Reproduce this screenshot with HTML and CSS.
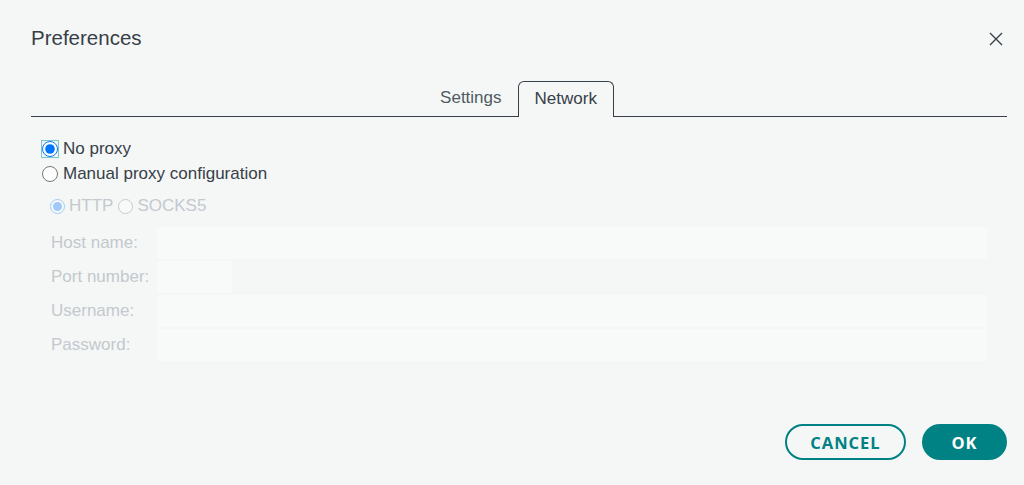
FILE: index.html
```html
<!DOCTYPE html>
<html lang="en">
<head>
    <meta charset="UTF-8">
    <meta name="viewport" content="width=device-width, initial-scale=1.0">
    <title>Preferences</title>
    <link rel="stylesheet" href="styles.css">
</head>
<body>

    <div class="dialog">
        <header class="dialog-header">
            <h1>Preferences</h1>
            <button class="close-button" aria-label="Close">
                <svg width="14" height="14" viewBox="0 0 14 14">
                    <path d="M1 1 L13 13 M13 1 L1 13" stroke="#374047" stroke-width="1.4" fill="none"/>
                </svg>
            </button>
        </header>

        <div class="tabs">
            <div class="tab">Settings</div>
            <div class="tab active">Network</div>
        </div>

        <div class="tab-content">
            <!-- Proxy mode -->
            <label class="radio-row">
                <input type="radio" name="proxy" class="focused" checked>
                <span>No proxy</span>
            </label>
            <label class="radio-row">
                <input type="radio" name="proxy">
                <span>Manual proxy configuration</span>
            </label>

            <div class="protocols">
                <label class="radio-small">
                    <input type="radio" name="protocol" checked>
                    <span>HTTP</span>
                </label>
                <label class="radio-small">
                    <input type="radio" name="protocol">
                    <span>SOCKS5</span>
                </label>
            </div>

            <div class="proxy-form">
                <label>Host name:</label>
                <input type="text" class="field" disabled>
                <label>Port number:</label>
                <input type="text" class="field short" disabled>
                <label>Username:</label>
                <input type="text" class="field" disabled>
                <label>Password:</label>
                <input type="password" class="field" disabled>
            </div>
        </div>

        <footer class="dialog-footer">
            <button class="btn btn-secondary">CANCEL</button>
            <button class="btn btn-primary">OK</button>
        </footer>
    </div>

</body>
</html>
```

FILE: styles.css
```css
body {
    font-family: 'Liberation Sans', Arial, sans-serif;
    margin: 0;
    padding: 0;
    background-color: #f5f7f7;
    color: #374047;
}

.dialog {
    height: 485px;
    box-sizing: border-box;
    padding: 0 17px 0 31px;
    display: flex;
    flex-direction: column;
}

.dialog-header {
    display: flex;
    justify-content: space-between;
    align-items: center;
    height: 78px;
}

.dialog-header h1 {
    margin: 0;
    font-size: 20.5px;
    font-weight: normal;
    padding-bottom: 2px;
}

.close-button {
    background: none;
    border: none;
    padding: 0;
    margin-right: 4px;
    width: 14px;
    height: 14px;
    cursor: pointer;
    display: flex;
}

.tabs {
    display: flex;
    justify-content: center;
    align-items: flex-end;
    height: 38px;
    border-bottom: 1px solid #374047;
}

.tab {
    font-size: 17px;
    color: #4e5b61;
    height: 35px;
    line-height: 34px;
    padding: 0 16px;
    box-sizing: border-box;
}

.tab.active {
    color: #374047;
    border: 1px solid #374047;
    border-bottom: none;
    border-radius: 6px 6px 0 0;
    padding: 0 16px;
    margin-bottom: -1px;
    height: 36px;
    background-color: #f5f7f7;
}

.tab-content {
    padding: 19px 0 0 10px;
    flex: 1;
}

.radio-row {
    display: flex;
    align-items: center;
    height: 25px;
    font-size: 17px;
}

.radio-row input {
    width: 16px;
    height: 16px;
    margin: 0 5px 0 1px;
}

.radio-row input.focused {
    outline: 1px solid #7cc6c6;
    outline-offset: 0;
}

.protocols {
    display: flex;
    align-items: center;
    height: 20px;
    margin: 10px 0 0 9px;
    font-size: 17px;
    color: #c3c9cd;
}

.radio-small {
    display: flex;
    align-items: center;
    margin-right: 5px;
}

.radio-small input {
    width: 15px;
    height: 15px;
    margin: 0 4px 0 0;
    opacity: 0.35;
}

.proxy-form {
    display: grid;
    grid-template-columns: 106px 830px;
    row-gap: 2px;
    align-items: center;
    margin: 11px 0 0 10px;
}

.proxy-form label {
    font-size: 17px;
    color: #c3c9cd;
}

.field {
    height: 32px;
    box-sizing: border-box;
    border: none;
    border-radius: 3px;
    background-color: #f8f9f9;
    font-size: 14px;
}

.field.short {
    width: 75px;
}

.dialog-footer {
    display: flex;
    justify-content: flex-end;
    gap: 16px;
    padding-bottom: 25px;
}

.btn {
    font-family: 'Open Sans', sans-serif;
    font-weight: bold;
    font-size: 16.5px;
    letter-spacing: 1px;
    height: 36px;
    border-radius: 18px;
    cursor: pointer;
    box-sizing: border-box;
}

.btn-secondary {
    width: 121px;
    background: none;
    color: #008184;
    border: 2px solid #008184;
}

.btn-primary {
    width: 85px;
    background-color: #008184;
    color: #fff;
    border: none;
}
```
